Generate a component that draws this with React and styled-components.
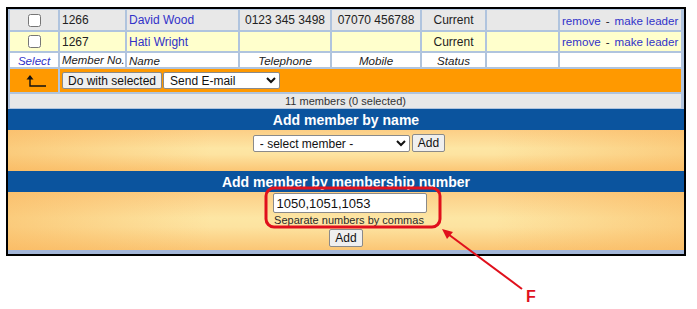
import React from "react";
import styled, { createGlobalStyle } from "styled-components";

const Global = createGlobalStyle`
  html, body { margin: 0; padding: 0; background: #fff; }
  body { font-family: "Liberation Sans", Arial, sans-serif; }
`;

const Page = styled.div`
  position: relative;
  width: 697px;
  height: 309px;
  padding: 7px 0 0 6px;
  box-sizing: border-box;
`;

const Frame = styled.div`
  width: 680px;
  box-sizing: border-box;
  border: 2px solid #000;
  background: #b0c4de;
  display: flex;
  flex-direction: column;
`;

const Table = styled.div`
  display: flex;
  flex-direction: column;
  gap: 2px;
  padding: 1px 3px 1px 2px;
`;

const COLS = "48px 65px 111px 90px 88px 63px 71px 121px";

const Row = styled.div`
  display: grid;
  grid-template-columns: ${COLS};
  gap: 2px;
  height: ${(p) => p.$h}px;
`;

const Cell = styled.div`
  background: ${(p) => p.$bg || "#fff"};
  grid-column: ${(p) => (p.$span ? `span ${p.$span}` : "auto")};
  display: flex;
  align-items: center;
  justify-content: ${(p) => (p.$align === "center" ? "center" : "flex-start")};
  padding: 0 2px;
  font-size: ${(p) => p.$fs || 12}px;
  font-style: ${(p) => (p.$italic ? "italic" : "normal")};
  color: #222;
  white-space: nowrap;
  overflow: hidden;
  gap: ${(p) => p.$gap || 0}px;
`;

const Link = styled.span`
  color: #3232c8;
  font-style: inherit;
`;

const Sep = styled.span`
  color: #222;
  margin: 0 5px;
`;

const Box = styled.input.attrs({ type: "checkbox" })`
  width: 13px;
  height: 13px;
  margin: 0;
  accent-color: #555;
`;

const Button = styled.button`
  font-family: "Liberation Sans", Arial, sans-serif;
  font-size: 12px;
  color: #111;
  background: #efefef;
  border: 1px solid #8a8a8a;
  border-radius: 2px;
  height: ${(p) => p.$h || 18}px;
  padding: 0 ${(p) => p.$px || 6}px;
  margin: 0;
  line-height: 1;
`;

const Select = styled.select`
  font-family: "Liberation Sans", Arial, sans-serif;
  font-size: 12px;
  color: #111;
  background: #fff;
  border: 1px solid #8a8a8a;
  border-radius: 2px;
  height: ${(p) => p.$h || 17}px;
  width: ${(p) => p.$w}px;
  padding: 0 2px;
  margin: 0;
`;

const Count = styled.div`
  grid-column: span 8;
  background: #e8e8e8;
  font-size: 11px;
  color: #333;
  display: flex;
  align-items: center;
  justify-content: center;
`;

const SectionHeader = styled.div`
  background: #0b549e;
  color: #fff;
  font-weight: bold;
  font-size: 14px;
  height: ${(p) => p.$h}px;
  display: flex;
  align-items: center;
  justify-content: center;
  padding-top: 1px;
  box-sizing: border-box;
`;

const SectionBody = styled.div`
  height: ${(p) => p.$h}px;
  box-sizing: border-box;
  padding-top: ${(p) => p.$pt}px;
  background:
    linear-gradient(to right, rgba(249, 182, 92, 0.55), rgba(249, 182, 92, 0) 30%, rgba(249, 182, 92, 0) 72%, rgba(249, 182, 92, 0.5)),
    linear-gradient(to bottom, #fcce86 0%, #fde6a4 45%, #fde3a0 60%, #fbc675 100%);
  display: flex;
  flex-direction: column;
  align-items: center;
`;

const InlineRow = styled.div`
  display: flex;
  align-items: center;
  gap: 2px;
  margin-left: 6px;
`;

const NumberInput = styled.input`
  font-family: "Liberation Sans", Arial, sans-serif;
  font-size: 13px;
  color: #111;
  width: 154px;
  height: 20px;
  box-sizing: border-box;
  border: 1px solid #8a8a8a;
  border-radius: 2px;
  padding: 0 3px;
  margin: 0 0 0 7px;
`;

const Hint = styled.div`
  font-size: 11px;
  line-height: 13px;
  color: #2a2a2a;
  margin: 1px 0 2px 6px;
`;

const BottomStrip = styled.div`
  height: 4px;
  background: #a3b6d8;
`;

const Overlay = styled.svg`
  position: absolute;
  left: 0;
  top: 0;
  pointer-events: none;
`;

function ArrowIcon() {
  return (
    <svg width="26" height="16" viewBox="0 0 26 16">
      <path d="M9 3 V13 H25" fill="none" stroke="#111" strokeWidth="1.4" />
      <path d="M5.5 6.5 L9 2 L12.5 6.5 Z" fill="#111" />
    </svg>
  );
}

const rows = [
  { no: "1266", name: "David Wood", tel: "0123 345 3498", mob: "07070 456788", bg: "#e8e8e8", h: 20 },
  { no: "1267", name: "Hati Wright", tel: "", mob: "", bg: "#ffffcc", h: 19 },
];

export default function App() {
  return (
    <Page>
      <Global />
      <Frame>
        <Table>
          {rows.map((r) => (
            <Row key={r.no} $h={r.h}>
              <Cell $bg={r.bg} $align="center"><Box /></Cell>
              <Cell $bg={r.bg}>{r.no}</Cell>
              <Cell $bg={r.bg}><Link>{r.name}</Link></Cell>
              <Cell $bg={r.bg} $align="center">{r.tel}</Cell>
              <Cell $bg={r.bg} $align="center">{r.mob}</Cell>
              <Cell $bg={r.bg} $align="center">Current</Cell>
              <Cell $bg={r.bg} />
              <Cell $bg={r.bg} $fs={11.6}><Link>remove</Link><Sep>-</Sep><Link>make leader</Link></Cell>
            </Row>
          ))}
          <Row $h={14}>
            <Cell $italic $fs={11.6} $align="center"><Link>Select</Link></Cell>
            <Cell $italic $fs={11.4}>Member No.</Cell>
            <Cell $italic $fs={11.6}>Name</Cell>
            <Cell $italic $fs={11.6} $align="center">Telephone</Cell>
            <Cell $italic $fs={11.6} $align="center">Mobile</Cell>
            <Cell $italic $fs={11.6} $align="center">Status</Cell>
            <Cell />
            <Cell />
          </Row>
          <Row $h={23}>
            <Cell $bg="#ff9900" $align="center"><ArrowIcon /></Cell>
            <Cell $bg="#ff9900" $span={7} $gap={1}>
              <Button $h={17} $px={5}>Do with selected</Button>
              <Select $w={117}>
                <option>Send E-mail</option>
              </Select>
            </Cell>
          </Row>
          <Row $h={14}>
            <Count>11 members (0 selected)</Count>
          </Row>
        </Table>
        <SectionHeader $h={21}>Add member by name</SectionHeader>
        <SectionBody $h={41} $pt={4}>
          <InlineRow>
            <Select $w={157}>
              <option>- select member -</option>
            </Select>
            <Button $h={18} $px={5}>Add</Button>
          </InlineRow>
        </SectionBody>
        <SectionHeader $h={21}>Add member by membership number</SectionHeader>
        <SectionBody $h={58} $pt={1}>
          <NumberInput defaultValue="1050,1051,1053" />
          <Hint>Separate numbers by commas</Hint>
          <Button $h={18} $px={5}>Add</Button>
        </SectionBody>
        <BottomStrip />
      </Frame>
      <Overlay width="697" height="309" viewBox="0 0 697 309">
        <rect x="266" y="188" width="174" height="39" rx="8" ry="8" fill="none" stroke="#e0101c" strokeWidth="3" />
        <line x1="448" y1="234" x2="522" y2="289" stroke="#e0101c" strokeWidth="2" />
        <path d="M442 229 L453 232 L447 239 Z" fill="#e0101c" />
        <text x="526" y="302" fill="#e0101c" fontFamily="Liberation Sans, Arial, sans-serif" fontWeight="bold" fontSize="16">F</text>
      </Overlay>
    </Page>
  );
}
